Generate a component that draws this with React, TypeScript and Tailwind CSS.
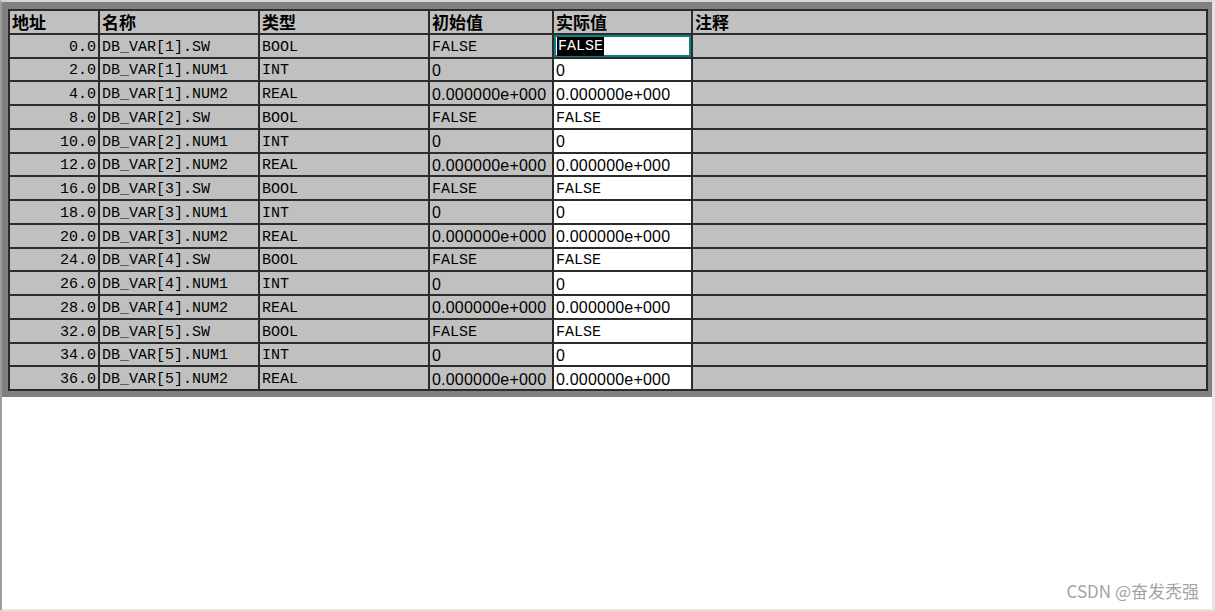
const MONO = "font-['Liberation_Mono','DejaVu_Sans_Mono',monospace]";
const SANS = "font-['Liberation_Sans','Arial',sans-serif]";

type Row = { addr: string; name: string; type: string; init: string; actual: string };

const TYPES = [
  { suffix: "SW", type: "BOOL", value: "FALSE" },
  { suffix: "NUM1", type: "INT", value: "0" },
  { suffix: "NUM2", type: "REAL", value: "0.000000e+000" },
];

const ROWS: Row[] = [];
for (let i = 0; i < 5; i++) {
  TYPES.forEach((t, j) => {
    const addr = i * 8 + [0, 2, 4][j];
    ROWS.push({
      addr: `${addr}.0`,
      name: `DB_VAR[${i + 1}].${t.suffix}`,
      type: t.type,
      init: t.value,
      actual: t.value,
    });
  });
}

const HEADERS = ["地址", "名称", "类型", "初始值", "实际值", "注释"];

function Value({ text }: { text: string }) {
  const isBool = text === "FALSE";
  return (
    <span className={isBool ? `${MONO} text-[15px]` : `${SANS} text-[16px] tracking-[0.2px]`}>{text}</span>
  );
}

export default function App() {
  return (
    <div className="relative flex h-[611px] w-[1215px] flex-col overflow-hidden border-t-2 border-r-[3px] border-b-2 border-l-2 border-t-[#d6d6d6] border-r-[#e4e4e4] border-b-[#e4e4e4] border-l-[#9c9c9c] bg-white">
      <div className="bg-[#808080] pt-[7px] pr-[4px] pb-[6px] pl-[6px]">
        <div className="grid h-[382px] grid-cols-[88px_158px_168px_122px_137px_1fr] grid-rows-[repeat(16,minmax(0,1fr))] gap-[2px] border-2 border-[#2c2c2c] bg-[#2c2c2c] leading-none text-black">
          {HEADERS.map((h) => (
            <div
              key={h}
              className="flex items-center bg-[#c0c0c0] pl-[2px] font-['Noto_Sans_CJK_SC',sans-serif] text-[17px] font-bold"
            >
              {h}
            </div>
          ))}
          {ROWS.map((r, idx) => (
            <Cells key={r.addr} row={r} selected={idx === 0} />
          ))}
        </div>
      </div>
      <div className="flex-1" />
      <div className="pointer-events-none absolute right-[13px] bottom-[6px] font-['Noto_Sans_CJK_SC',sans-serif] text-[17px] text-[#a3a3a3]">
        CSDN @奋发秃强
      </div>
    </div>
  );
}

function Cells({ row, selected }: { row: Row; selected: boolean }) {
  return (
    <>
      <div className={`flex items-center justify-end bg-[#c0c0c0] pt-[3px] pr-[2px] ${MONO} text-[15px]`}>{row.addr}</div>
      <div className={`flex items-center bg-[#c0c0c0] pt-[3px] pl-[2px] ${MONO} text-[15px]`}>{row.name}</div>
      <div className={`flex items-center bg-[#c0c0c0] pt-[3px] pl-[2px] ${MONO} text-[15px]`}>{row.type}</div>
      <div className="flex items-center bg-[#c0c0c0] pt-[3px] pl-[2px]">
        <Value text={row.init} />
      </div>
      {selected ? (
        <div className="flex bg-white">
          <div className="flex flex-1 items-center border-2 border-[#0b8181] pt-[2px] pl-[1px]">
            <span className={`bg-black px-[1px] py-[2px] text-white ${MONO} text-[15px]`}>{row.actual}</span>
          </div>
        </div>
      ) : (
        <div className="flex items-center bg-white pt-[3px] pl-[2px]">
          <Value text={row.actual} />
        </div>
      )}
      <div className="bg-[#c0c0c0]" />
    </>
  );
}
